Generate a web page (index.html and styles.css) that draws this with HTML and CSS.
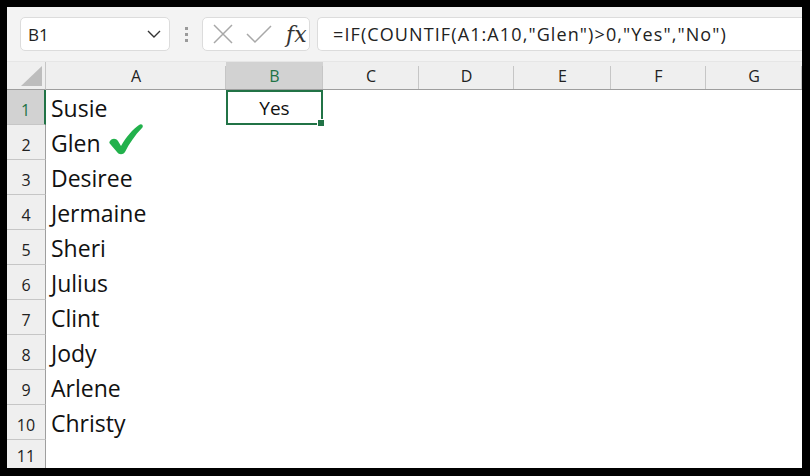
FILE: index.html
```html
<!DOCTYPE html>
<html lang="en">
<head>
    <meta charset="UTF-8">
    <title>COUNTIF Yes/No</title>
    <link rel="stylesheet" href="styles.css">
</head>
<body>

    <div class="frame">
        <div class="formula-bar">
            <div class="name-box">
                <span>B1</span>
                <svg class="chevron" width="14" height="8" viewBox="0 0 14 8"><path d="M1 1 L7 7 L13 1" fill="none" stroke="#333" stroke-width="1.4"/></svg>
            </div>
            <div class="grip"><i></i><i></i><i></i></div>
            <div class="fx-buttons">
                <svg width="20" height="20" viewBox="0 0 20 20"><path d="M1 1 L19 19 M19 1 L1 19" stroke="#a8a8a8" stroke-width="1.5"/></svg>
                <svg width="26" height="20" viewBox="0 0 26 20"><path d="M1 10 L9 18 L25 2" fill="none" stroke="#a8a8a8" stroke-width="1.5"/></svg>
                <span class="fx">fx</span>
            </div>
            <div class="formula">=IF(COUNTIF(A1:A10,"Glen")&gt;0,"Yes","No")</div>
        </div>

        <div class="sheet">
            <div class="corner"><div class="tri"></div></div>
            <div class="col-head">A</div>
            <div class="col-head active">B</div>
            <div class="col-head">C</div>
            <div class="col-head">D</div>
            <div class="col-head">E</div>
            <div class="col-head">F</div>
            <div class="col-head">G</div>

            <div class="row-head active">1</div>
            <div class="cell">Susie</div>
            <div class="cell selected">Yes</div>
            <div class="cell"></div><div class="cell"></div><div class="cell"></div><div class="cell"></div><div class="cell"></div>

            <div class="row-head">2</div>
            <div class="cell">Glen
                <svg class="tick" width="34" height="32" viewBox="0 0 34 32"><path d="M1 18 C3 15 7 15 9 18 L12 23 C17 14 24 6 30 2 C33 0 35 3 33 5 C26 12 20 21 16 29 C14 32 10 32 8 29 L2 22 C0 20 0 19 1 18 Z" fill="#22b14c"/></svg>
            </div>
            <div class="cell"></div><div class="cell"></div><div class="cell"></div><div class="cell"></div><div class="cell"></div><div class="cell"></div>

            <div class="row-head">3</div>
            <div class="cell">Desiree</div>
            <div class="cell"></div><div class="cell"></div><div class="cell"></div><div class="cell"></div><div class="cell"></div><div class="cell"></div>

            <div class="row-head">4</div>
            <div class="cell">Jermaine</div>
            <div class="cell"></div><div class="cell"></div><div class="cell"></div><div class="cell"></div><div class="cell"></div><div class="cell"></div>

            <div class="row-head">5</div>
            <div class="cell">Sheri</div>
            <div class="cell"></div><div class="cell"></div><div class="cell"></div><div class="cell"></div><div class="cell"></div><div class="cell"></div>

            <div class="row-head">6</div>
            <div class="cell">Julius</div>
            <div class="cell"></div><div class="cell"></div><div class="cell"></div><div class="cell"></div><div class="cell"></div><div class="cell"></div>

            <div class="row-head">7</div>
            <div class="cell">Clint</div>
            <div class="cell"></div><div class="cell"></div><div class="cell"></div><div class="cell"></div><div class="cell"></div><div class="cell"></div>

            <div class="row-head">8</div>
            <div class="cell">Jody</div>
            <div class="cell"></div><div class="cell"></div><div class="cell"></div><div class="cell"></div><div class="cell"></div><div class="cell"></div>

            <div class="row-head">9</div>
            <div class="cell">Arlene</div>
            <div class="cell"></div><div class="cell"></div><div class="cell"></div><div class="cell"></div><div class="cell"></div><div class="cell"></div>

            <div class="row-head">10</div>
            <div class="cell">Christy</div>
            <div class="cell"></div><div class="cell"></div><div class="cell"></div><div class="cell"></div><div class="cell"></div><div class="cell"></div>

            <div class="row-head last">11</div>
            <div class="cell"></div>
            <div class="cell"></div><div class="cell"></div><div class="cell"></div><div class="cell"></div><div class="cell"></div><div class="cell"></div>
        </div>
    </div>

</body>
</html>
```

FILE: styles.css
```css
body {
    margin: 0;
    background: #000;
    font-family: "Open Sans", "Noto Sans", sans-serif;
}
.frame {
    margin: 7px 0 0 7px;
    width: 795px;
    height: 461px;
    background: #fff;
    overflow: hidden;
}
.formula-bar {
    height: 55px;
    background: #f3f3f3;
    display: flex;
    align-items: center;
    padding-left: 13px;
    border-bottom: 1px solid #e6e6e6;
    box-sizing: border-box;
}
.name-box {
    width: 150px;
    height: 34px;
    box-sizing: border-box;
    background: #fff;
    border: 1px solid #dcdcdc;
    border-radius: 5px;
    display: flex;
    align-items: center;
    justify-content: space-between;
    padding: 0 8px 0 7px;
    font-size: 17px;
    color: #222;
}
.grip {
    width: 32px;
    display: flex;
    flex-direction: column;
    align-items: center;
    gap: 3px;
}
.grip i {
    width: 3px;
    height: 3px;
    background: #9a9a9a;
}
.fx-buttons {
    width: 108px;
    height: 34px;
    box-sizing: border-box;
    background: #fff;
    border: 1px solid #dcdcdc;
    border-radius: 5px;
    display: flex;
    align-items: center;
    padding-left: 10px;
    gap: 13px;
}
.fx {
    font-family: "DejaVu Serif", "Liberation Serif", serif;
    font-style: italic;
    font-size: 22px;
    color: #333;
    margin-left: 1px;
}
.formula {
    flex: 1;
    margin-left: 7px;
    height: 34px;
    box-sizing: border-box;
    background: #fff;
    border: 1px solid #dcdcdc;
    border-right: none;
    border-radius: 5px 0 0 5px;
    display: flex;
    align-items: center;
    padding-left: 15px;
    font-size: 18px;
    letter-spacing: 1.1px;
    color: #222;
    white-space: nowrap;
}
.sheet {
    display: grid;
    grid-template-columns: 39px 180px 97px 96px 95px 97px 95px 96px;
    grid-template-rows: 28px repeat(10, 35px) 28px;
}
.corner {
    background: #efefef;
    border-right: 1px solid #c6c6c6;
    border-bottom: 1px solid #9e9e9e;
    position: relative;
}
.tri {
    position: absolute;
    right: 3px;
    bottom: 3px;
    width: 0;
    height: 0;
    border-left: 21px solid transparent;
    border-bottom: 20px solid #bdbdbd;
}
.col-head {
    background: #efefef;
    border-bottom: 1px solid #9e9e9e;
    font-size: 16px;
    color: #222;
    display: flex;
    align-items: center;
    justify-content: center;
    position: relative;
}
.col-head::after {
    content: "";
    position: absolute;
    right: 0;
    top: 4px;
    bottom: 0;
    width: 1px;
    background: #c6c6c6;
}
.col-head.active {
    background: #d2d2d2;
    color: #217346;
}
.row-head {
    background: #efefef;
    border-right: 1px solid #9e9e9e;
    border-bottom: 1px solid #c6c6c6;
    font-size: 16px;
    color: #222;
    display: flex;
    align-items: flex-end;
    justify-content: center;
    padding-bottom: 3px;
    box-sizing: border-box;
}
.row-head.last {
    border-bottom: none;
    padding-bottom: 0;
    line-height: 24px;
}
.row-head.active {
    background: #d2d2d2;
    color: #217346;
    border-right: 2px solid #217346;
}
.cell {
    font-size: 23px;
    color: #111;
    display: flex;
    align-items: flex-end;
    padding: 0 0 2px 5px;
    box-sizing: border-box;
    line-height: 30px;
}
.cell.selected {
    justify-content: center;
    padding-left: 0;
    font-size: 19px;
    border: 2px solid #217346;
    padding-bottom: 0;
    position: relative;
}
.cell.selected::after {
    content: "";
    position: absolute;
    right: -4px;
    bottom: -4px;
    width: 6px;
    height: 6px;
    background: #217346;
    border: 1px solid #fff;
}
.tick {
    margin-left: 8px;
    margin-bottom: 3px;
}
```
